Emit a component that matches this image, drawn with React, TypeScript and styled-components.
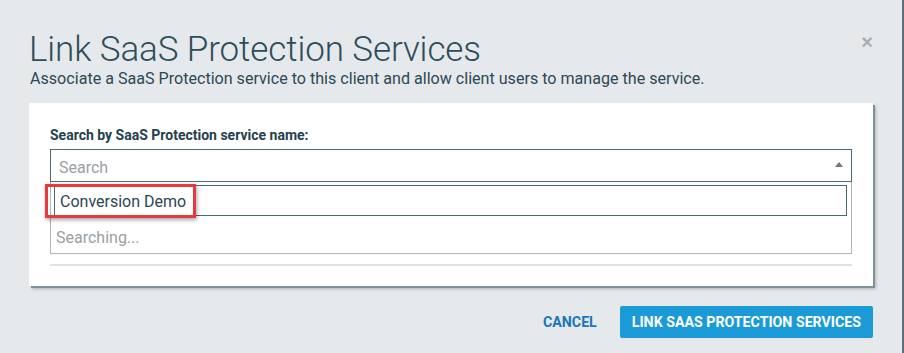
import { FC } from 'react';
import styled, { createGlobalStyle } from 'styled-components';

const GlobalStyle = createGlobalStyle`
  html, body {
    margin: 0;
    padding: 0;
    background: #e6e9ec;
  }
  body {
    font-family: Roboto, 'Liberation Sans', sans-serif;
  }
`;

const Page = styled.div`
  width: 904px;
  height: 353px;
  box-sizing: border-box;
  background: #e6e9ec;
  border-right: 2px solid #5d7079;
  position: relative;
  padding: 32px 29px 0 29px;
`;

const Header = styled.div`
  display: flex;
  justify-content: space-between;
  align-items: flex-start;
`;

const Title = styled.h1`
  margin: 0;
  font-weight: 300;
  font-size: 35px;
  line-height: 36px;
  color: #2e4d5a;
  letter-spacing: -0.1px;
`;

const Close = styled.button`
  border: 0;
  background: none;
  padding: 0;
  margin: 0;
  color: #a9aeb2;
  font-size: 20px;
  line-height: 20px;
  font-family: Arial, 'Liberation Sans', sans-serif;
  font-weight: 700;
  cursor: pointer;
`;

const Subtitle = styled.p`
  margin: 1px 0 0 1px;
  font-size: 16.1px;
  line-height: 20px;
  color: #2c4854;
`;

const Card = styled.div`
  margin-top: 14px;
  width: 844px;
  box-sizing: border-box;
  background: #fff;
  padding: 24px 21px 20px 21px;
  box-shadow: 2px 2px 0 #7d9299, 3px 3px 3px rgba(60, 80, 90, 0.35);
`;

const Label = styled.label`
  display: block;
  font-size: 14px;
  font-weight: 700;
  color: #24414d;
  line-height: 16px;
  margin-bottom: 6px;
`;

const Field = styled.div`
  position: relative;
  width: 802px;
`;

const SelectBox = styled.div`
  height: 33px;
  box-sizing: border-box;
  border: 1px solid #4e6873;
  display: flex;
  align-items: center;
  justify-content: space-between;
  padding: 3px 8px 0 8px;
  font-size: 16px;
  color: #9aa0a4;
`;

const Caret = styled.span`
  width: 0;
  height: 0;
  border-left: 4px solid transparent;
  border-right: 4px solid transparent;
  border-bottom: 5px solid #707679;
  margin-top: -6px;
`;

const Dropdown = styled.div`
  border: 1px solid #b1b5b8;
  border-top: 0;
  padding: 3px 4px 0 3px;
  height: 72px;
  box-sizing: border-box;
`;

const SearchInput = styled.div`
  height: 31px;
  box-sizing: border-box;
  border: 1px solid #4e6873;
  display: flex;
  align-items: center;
  padding: 2px 0 0 5px;
  font-size: 16px;
  color: #2b4652;
`;

const Status = styled.div`
  padding: 12px 0 0 2px;
  font-size: 16px;
  color: #9aa0a4;
`;

const Highlight = styled.div`
  position: absolute;
  left: -5px;
  top: 35px;
  width: 151px;
  height: 34px;
  box-sizing: border-box;
  border: 3px solid #e8393f;
  box-shadow: 1px 2px 4px rgba(0, 0, 0, 0.35);
  pointer-events: none;
`;

const Divider = styled.hr`
  margin: 10px 0 0 0;
  width: 802px;
  border: 0;
  border-top: 2px solid #dfe2e4;
`;

const Actions = styled.div`
  display: flex;
  justify-content: flex-end;
  align-items: center;
  gap: 23px;
  margin-top: 20px;
  width: 844px;
`;

const Button = styled.button<{ $primary?: boolean }>`
  font-family: Roboto, 'Liberation Sans', sans-serif;
  font-weight: 700;
  font-size: 14.2px;
  letter-spacing: 0;
  border: 0;
  border-radius: 2px;
  height: 32px;
  cursor: pointer;
  padding: ${(p) => (p.$primary ? '0 12px' : '0')};
  background: ${(p) => (p.$primary ? '#1a9bd7' : 'transparent')};
  color: ${(p) => (p.$primary ? '#fff' : '#1876b9')};
`;

const App: FC = () => (
  <>
    <GlobalStyle />
    <Page>
      <Header>
        <Title>Link SaaS Protection Services</Title>
        <Close aria-label="close">×</Close>
      </Header>
      <Subtitle>
        Associate a SaaS Protection service to this client and allow client users to manage the service.
      </Subtitle>
      <Card>
        <Label>Search by SaaS Protection service name:</Label>
        <Field>
          <SelectBox>
            <span>Search</span>
            <Caret />
          </SelectBox>
          <Dropdown>
            <SearchInput>Conversion Demo</SearchInput>
            <Status>Searching...</Status>
          </Dropdown>
          <Highlight />
        </Field>
        <Divider />
      </Card>
      <Actions>
        <Button>CANCEL</Button>
        <Button $primary>LINK SAAS PROTECTION SERVICES</Button>
      </Actions>
    </Page>
  </>
);

export default App;
